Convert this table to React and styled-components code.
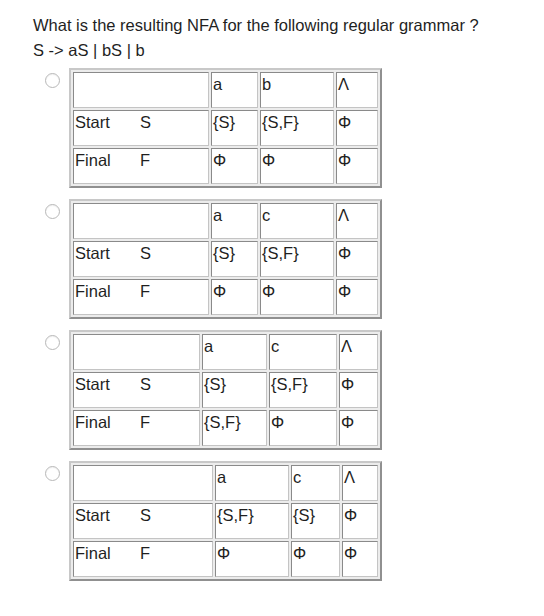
import styled, { createGlobalStyle } from "styled-components";

const GlobalStyle = createGlobalStyle`
  body {
    margin: 0;
    background: #fff;
    font-family: "Liberation Sans", Arial, sans-serif;
    color: #1f1f1f;
  }
`;

const options = [
  {
    cols: [136, 47, 74, 42],
    head: ["a", "b", "Λ"],
    rows: [
      ["Start", "S", "{S}", "{S,F}", "Φ"],
      ["Final", "F", "Φ", "Φ", "Φ"],
    ],
  },
  {
    cols: [136, 47, 74, 42],
    head: ["a", "c", "Λ"],
    rows: [
      ["Start", "S", "{S}", "{S,F}", "Φ"],
      ["Final", "F", "Φ", "Φ", "Φ"],
    ],
  },
  {
    cols: [127, 65, 68, 39],
    head: ["a", "c", "Λ"],
    rows: [
      ["Start", "S", "{S}", "{S,F}", "Φ"],
      ["Final", "F", "{S,F}", "Φ", "Φ"],
    ],
  },
  {
    cols: [140, 74, 49, 36],
    head: ["a", "c", "Λ"],
    rows: [
      ["Start", "S", "{S,F}", "{S}", "Φ"],
      ["Final", "F", "Φ", "Φ", "Φ"],
    ],
  },
];

const App = () => {
  return (
    <>
      <GlobalStyle />
      <Page>
        <Title>What is the resulting NFA for the following regular grammar ?</Title>
        <Grammar>S -&gt; aS | bS | b</Grammar>
        <OptionList>
          {options.map((opt, i) => (
            <Option key={i}>
              <Radio />
              <Table $cols={opt.cols}>
                <Cell />
                {opt.head.map((h) => (
                  <Cell key={h}>{h}</Cell>
                ))}
                {opt.rows.map((row) => (
                  <Row key={row[0]} row={row} />
                ))}
              </Table>
            </Option>
          ))}
        </OptionList>
      </Page>
    </>
  );
};

const Row = ({ row }) => {
  const [label, state, ...rest] = row;
  return (
    <>
      <Cell>
        <Label>{label}</Label>
        {state}
      </Cell>
      {rest.map((v, j) => (
        <Cell key={j}>{v}</Cell>
      ))}
    </>
  );
};

export default App;

const Page = styled.div`
  width: 544px;
  padding: 16px 0 20px 33px;
  box-sizing: border-box;
  font-size: 16.5px;
`;

const Title = styled.p`
  margin: 0;
  line-height: 19px;
`;

const Grammar = styled.p`
  margin: 6px 0 0;
  line-height: 19px;
`;

const OptionList = styled.div`
  display: flex;
  flex-direction: column;
  gap: 11px;
  margin-top: 8px;
`;

const Option = styled.div`
  display: flex;
  align-items: flex-start;
`;

const Radio = styled.span`
  width: 13px;
  height: 13px;
  margin: 5px 9px 0 12px;
  border: 1px solid #b8b8b8;
  border-radius: 50%;
  background: #fff;
  box-shadow: inset 0 1px 1px rgba(0, 0, 0, 0.06);
  flex: none;
`;

const Table = styled.div`
  display: grid;
  grid-template-columns: ${({ $cols }) => $cols.map((c) => c + "px").join(" ")};
  grid-auto-rows: 36px;
  gap: 2px;
  padding: 2px;
  border: 2px solid;
  border-color: #c8c8c8 #909090 #909090 #c8c8c8;
  background: #ececec;
`;

const Cell = styled.div`
  box-sizing: border-box;
  padding: 2px 1px;
  border: 1px solid;
  border-color: #8a8a8a #c4c4c4 #c4c4c4 #8a8a8a;
  background: #fff;
  line-height: 19px;
  white-space: nowrap;
  overflow: hidden;
`;

const Label = styled.span`
  display: inline-block;
  width: 65px;
`;
